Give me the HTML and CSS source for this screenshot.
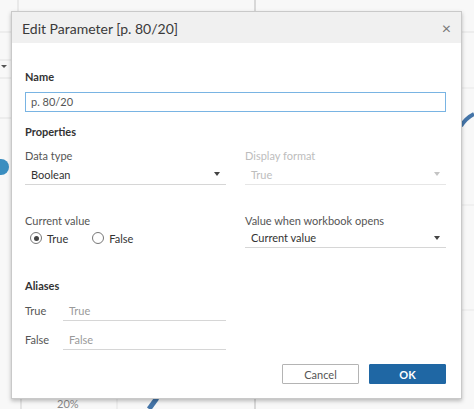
FILE: index.html
```html
<!DOCTYPE html>
<html lang="en">
<head>
  <meta charset="UTF-8">
  <meta name="viewport" content="width=device-width, initial-scale=1.0">
  <title>Edit Parameter</title>
  <link rel="stylesheet" href="styles.css">
</head>
<body>
<!-- worksheet behind the dialog -->
<svg class="sheet" width="474" height="409" viewBox="0 0 474 409">
  <line x1="0" y1="32" x2="474" y2="32" stroke="#e2e2e2"/>
  <line x1="0" y1="60" x2="12" y2="60" stroke="#e2e2e2"/>
  <line x1="0" y1="78" x2="12" y2="78" stroke="#e2e2e2"/>
  <line x1="0" y1="118" x2="12" y2="118" stroke="#e2e2e2"/>
  <line x1="460" y1="88" x2="474" y2="88" stroke="#e8e8e8"/>
  <line x1="460" y1="205" x2="474" y2="205" stroke="#e8e8e8"/>
  <line x1="460" y1="310" x2="474" y2="310" stroke="#e8e8e8"/>
  <line x1="18" y1="0" x2="18" y2="30" stroke="#dadada"/>
  <line x1="21" y1="398" x2="21" y2="409" stroke="#cfcfcf"/>
  <line x1="117" y1="398" x2="117" y2="409" stroke="#e4e4e4"/>
  <line x1="255" y1="0" x2="255" y2="12" stroke="#b8b8b8"/>
  <line x1="255" y1="398" x2="255" y2="409" stroke="#b8b8b8"/>
  <path d="M1 65 l3 3 l3 -3 z" fill="#555"/>
  <circle cx="1" cy="167" r="8" fill="#3a8ec0"/>
  <path d="M461 126 Q466 118 474 114" stroke="#4575a8" stroke-width="4" fill="none"/>
  <path d="M149 409 L157 398" stroke="#4575a8" stroke-width="5" fill="none"/>
  <text x="57" y="408" font-size="11" fill="#888" font-family="Lato, sans-serif">20%</text>
</svg>

<div class="dialog">
  <div class="dialog-header">
    <span class="dialog-title">Edit Parameter [p. 80/20]</span>
    <span class="close">&times;</span>
  </div>

  <div class="dialog-body">
    <div class="section-title first">Name</div>
    <div class="name-input">p. 80/20</div>

    <div class="section-title props">Properties</div>

    <div class="columns">
      <div class="col">
        <div class="label">Data type</div>
        <div class="select">
          <span>Boolean</span>
          <span class="arrow"></span>
        </div>
      </div>
      <div class="col disabled">
        <div class="label">Display format</div>
        <div class="select">
          <span>True</span>
          <span class="arrow"></span>
        </div>
      </div>
    </div>

    <div class="columns second">
      <div class="col">
        <div class="label">Current value</div>
        <div class="radios">
          <label class="radio"><span class="dot checked"></span>True</label>
          <label class="radio"><span class="dot"></span>False</label>
        </div>
      </div>
      <div class="col">
        <div class="label">Value when workbook opens</div>
        <div class="select short">
          <span>Current value</span>
          <span class="arrow"></span>
        </div>
      </div>
    </div>

    <div class="section-title aliases">Aliases</div>
    <div class="alias-row">
      <span class="alias-label">True</span>
      <span class="alias-input">True</span>
    </div>
    <div class="alias-row">
      <span class="alias-label">False</span>
      <span class="alias-input">False</span>
    </div>

    <div class="buttons">
      <button class="btn btn-cancel">Cancel</button>
      <button class="btn btn-ok">OK</button>
    </div>
  </div>
</div>
</body>
</html>
```

FILE: styles.css
```css
* {
  margin: 0;
  padding: 0;
  box-sizing: border-box;
  font-family: Lato, 'Noto Sans', sans-serif;
}

body {
  width: 474px;
  height: 409px;
  overflow: hidden;
  background: #f8f8f8;
  position: relative;
  color: #333;
}

.sheet {
  position: absolute;
  left: 0;
  top: 0;
}

.dialog {
  position: absolute;
  left: 11px;
  top: 11px;
  width: 451px;
  height: 388px;
  background: white;
  border: 1px solid #c9c9c9;
  box-shadow: 0 2px 4px rgba(0, 0, 0, 0.25);
}

.dialog-header {
  height: 31px;
  background: #f0f0f0;
  display: flex;
  align-items: center;
  justify-content: space-between;
  padding: 0 10px 0 10px;
}

.dialog-title {
  font-size: 14px;
  color: #3a3a3a;
  margin-top: 1px;
}

.close {
  font-size: 16px;
  color: #777;
  line-height: 1;
}

.dialog-body {
  padding: 0 15px 0 13px;
}

.section-title {
  font-size: 11px;
  font-weight: bold;
  color: #333;
  line-height: 14px;
}

.section-title.first {
  margin-top: 27px;
}

.name-input {
  margin-top: 8px;
  height: 20px;
  border: 1.5px solid #79b4e3;
  font-size: 11px;
  color: #555;
  line-height: 17px;
  padding-left: 5px;
}

.section-title.props {
  margin-top: 13px;
}

.columns {
  display: flex;
  gap: 19px;
  margin-top: 10px;
}

.columns.second {
  margin-top: 29px;
}

.col {
  flex: 1;
}

.label {
  font-size: 11px;
  color: #555;
  line-height: 14px;
}

.select {
  margin-top: 1px;
  height: 21px;
  border-bottom: 1px solid #d6d6d6;
  display: flex;
  align-items: center;
  justify-content: space-between;
  font-size: 11px;
  color: #333;
  padding: 0 6px 0 6px;
}

.select.short {
  margin-top: 0;
  height: 20px;
}

.arrow {
  width: 0;
  height: 0;
  border-left: 3.5px solid transparent;
  border-right: 3.5px solid transparent;
  border-top: 4px solid #444;
}

.disabled .label,
.disabled .select {
  color: #bdbdbd;
}

.disabled .arrow {
  border-top-color: #c4c4c4;
}

.disabled .select {
  border-bottom-color: #e6e6e6;
}

.radios {
  display: flex;
  gap: 24px;
  height: 20px;
  align-items: center;
  padding-left: 5px;
}

.radio {
  display: flex;
  align-items: center;
  gap: 5px;
  font-size: 11px;
  color: #333;
}

.dot {
  width: 12px;
  height: 12px;
  border: 1px solid #777;
  border-radius: 50%;
  display: flex;
  align-items: center;
  justify-content: center;
}

.dot.checked::after {
  content: '';
  width: 5px;
  height: 5px;
  border-radius: 50%;
  background: #444;
}

.section-title.aliases {
  margin-top: 31px;
}

.alias-row {
  display: flex;
  align-items: stretch;
  width: 201px;
  height: 21px;
  margin-top: 7px;
}

.alias-row + .alias-row {
  margin-top: 8px;
}

.alias-label {
  width: 38px;
  font-size: 11px;
  color: #555;
  display: flex;
  align-items: center;
}

.alias-input {
  flex: 1;
  border-bottom: 1px solid #d6d6d6;
  font-size: 11px;
  color: #9a9a9a;
  display: flex;
  align-items: center;
  padding-left: 6px;
}

.buttons {
  display: flex;
  justify-content: flex-end;
  gap: 10px;
  margin-top: 14px;
}

.btn {
  width: 77px;
  height: 20px;
  font-size: 11px;
  border-radius: 1px;
  cursor: pointer;
}

.btn-cancel {
  background: white;
  border: 1px solid #b4b4b4;
  color: #555;
}

.btn-ok {
  background: #1f67a4;
  border: 1px solid #1f67a4;
  color: white;
  font-weight: bold;
}
```
